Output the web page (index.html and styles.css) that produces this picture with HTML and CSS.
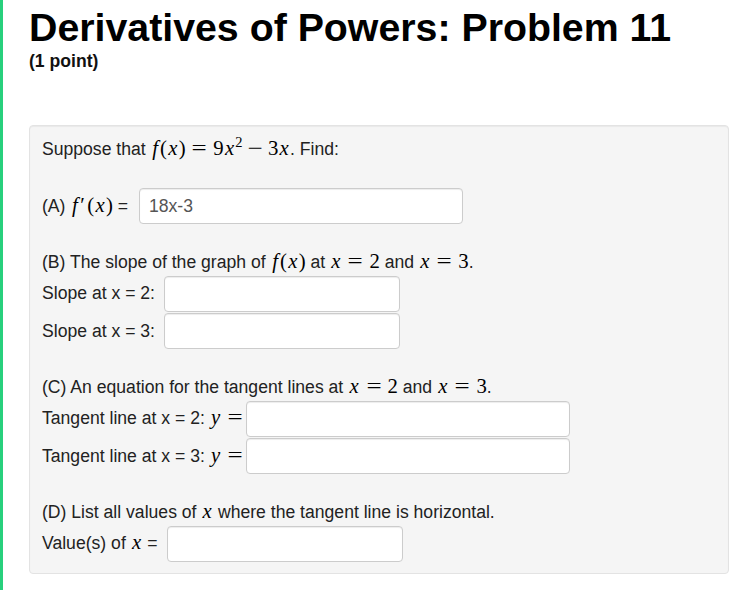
FILE: index.html
```html
<!DOCTYPE html>
<html lang="en">
<head>
    <meta charset="UTF-8">
    <meta name="viewport" content="width=device-width, initial-scale=1.0">
    <title>Derivatives of Powers: Problem 11</title>
    <link rel="stylesheet" href="styles.css">
</head>
<body>
    <div class="page">
        <h1 class="title">Derivatives of Powers: Problem 11</h1>
        <div class="points">(1 point)</div>

        <!-- Problem body -->
        <div class="problem">
            <div class="line">Suppose that <span class="m"><i class="f">f</i>(<i>x</i>)<span class="rel">=</span>9<i>x</i><sup>2</sup><span class="bin">&minus;</span>3<i>x</i></span>. Find:</div>

            <div class="part">
                <div class="row first">
                    <span class="label">(A) <span class="m"><i class="f">f</i><span class="prime">&prime;</span>(<i>x</i>)</span> =</span>
                    <input class="answer wide" type="text" value="18x-3">
                </div>
            </div>

            <div class="part">
                <div class="line">(B) The slope of the graph of <span class="m"><i class="f">f</i>(<i>x</i>)</span> at <span class="m"><i>x</i><span class="rel">=</span>2</span> and <span class="m"><i>x</i><span class="rel">=</span>3</span>.</div>
                <div class="row">
                    <span class="label">Slope at x = 2:</span>
                    <input class="answer" type="text">
                </div>
                <div class="row">
                    <span class="label">Slope at x = 3:</span>
                    <input class="answer" type="text">
                </div>
            </div>

            <div class="part">
                <div class="line">(C) An equation for the tangent lines at <span class="m"><i>x</i><span class="rel">=</span>2</span> and <span class="m"><i>x</i><span class="rel">=</span>3</span>.</div>
                <div class="row eq">
                    <span class="label">Tangent line at x = 2: <span class="m"><i>y</i><span class="rel end">=</span></span></span>
                    <input class="answer wide" type="text">
                </div>
                <div class="row eq">
                    <span class="label">Tangent line at x = 3: <span class="m"><i>y</i><span class="rel end">=</span></span></span>
                    <input class="answer wide" type="text">
                </div>
            </div>

            <div class="part">
                <div class="line">(D) List all values of <span class="m"><i>x</i></span> where the tangent line is horizontal.</div>
                <div class="row">
                    <span class="label">Value(s) of <span class="m"><i>x</i></span> =</span>
                    <input class="answer" type="text">
                </div>
            </div>
        </div>
    </div>
</body>
</html>
```

FILE: styles.css
```css
body {
    margin: 0;
    padding: 0;
    background-color: #fff;
    color: #222;
    font-family: "Liberation Sans", Arial, sans-serif;
    font-size: 17.6px;
    line-height: 25px;
}

.page {
    box-sizing: border-box;
    min-height: 100vh;
    border-left: 3px solid #27d07c;
    padding: 6px 0 0 26px;
}

.title {
    margin: 0;
    font-size: 39.3px;
    line-height: 43px;
    font-weight: bold;
    color: #000;
}

.points {
    font-weight: bold;
    color: #111;
}

/* Grey problem box */
.problem {
    box-sizing: border-box;
    width: 700px;
    margin-top: 51px;
    padding: 11px 12px;
    background-color: #f5f5f5;
    border: 1px solid #e3e3e3;
    border-radius: 4px;
    box-shadow: inset 0 1px 1px rgba(0, 0, 0, 0.05);
}

.part {
    margin-top: 25px;
}

.row {
    display: flex;
    align-items: center;
    gap: 9px;
    padding: 1px 0 0.5px;
}

.row.first {
    gap: 11px;
}

.row.eq {
    gap: 3px;
}

.answer {
    box-sizing: border-box;
    width: 236px;
    height: 36px;
    margin: 0;
    padding: 0 9px;
    font-family: "Liberation Sans", Arial, sans-serif;
    font-size: 17.6px;
    color: #555;
    background-color: #fff;
    border: 1px solid #ccc;
    border-radius: 4px;
    box-shadow: inset 0 1px 1px rgba(0, 0, 0, 0.075);
    outline: none;
}

.answer.wide {
    width: 324px;
}

/* Math, set to look like TeX output */
.m {
    font-family: "Liberation Serif", "Times New Roman", serif;
    font-size: 1.18em;
    line-height: 1;
    color: #000;
    white-space: nowrap;
}

.m i {
    font-style: italic;
    padding: 0 0.06em;
}

.m i.f {
    padding: 0 0.1em 0 0.08em;
}

.m .prime {
    padding: 0 0.12em 0 0.02em;
}

.m .rel,
.m .bin {
    display: inline-block;
    width: 0.778em;
    text-align: center;
    transform: scaleX(1.3);
}

.m .rel {
    margin: 0 0.278em;
}

.m .rel.end {
    margin-right: 0;
}

.m .bin {
    margin: 0 0.222em;
}

.m sup {
    font-size: 0.7em;
    line-height: 0;
    vertical-align: 0.55em;
}
```
